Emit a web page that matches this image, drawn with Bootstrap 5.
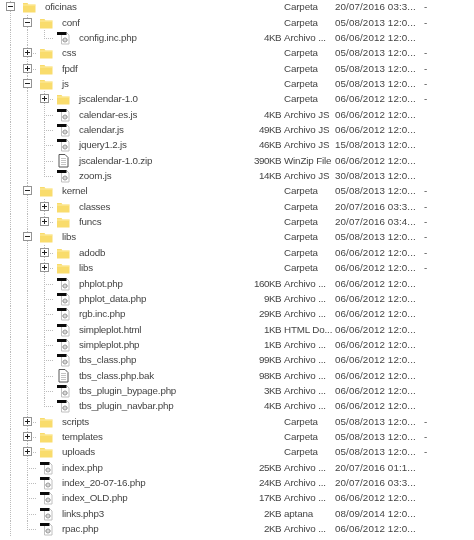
<!DOCTYPE html>
<html lang="es">
<head>
<meta charset="utf-8">
<title>oficinas</title>
<link href="https://cdn.jsdelivr.net/npm/bootstrap@5.3.0/dist/css/bootstrap.min.css" rel="stylesheet">
<style>
html, body { background: #fff; overflow: hidden; }
.explorer { margin-top: -.7px; padding-left: 2px; font: 9.8px/15.35px "Liberation Sans", Arial, sans-serif; color: #444; filter: blur(.35px); }
.fila { height: 15.35px; white-space: nowrap; }
.arbol { width: 243px; }
.cel { width: 17px; height: 15.35px; flex: none; background-repeat: no-repeat; }
.v { background-image: repeating-linear-gradient(to bottom, #bcbcbc 0 1px, transparent 1px 2px); background-size: 1px 100%; background-position: 8px 0; }
.tee { background-image: repeating-linear-gradient(to bottom, #bcbcbc 0 1px, transparent 1px 2px), repeating-linear-gradient(to right, #bcbcbc 0 1px, transparent 1px 2px); background-size: 1px 100%, 9px 1px; background-position: 8px 0, 8px 8px; }
.ell { background-image: repeating-linear-gradient(to bottom, #bcbcbc 0 1px, transparent 1px 2px), repeating-linear-gradient(to right, #bcbcbc 0 1px, transparent 1px 2px); background-size: 1px 8px, 9px 1px; background-position: 8px 0, 8px 8px; }
.caja { width: 9px; height: 9px; margin: 3px 0 0 4px; border: 1px solid #949494; background: #fff no-repeat center; display: block; }
.mas { background-image: linear-gradient(#222, #222), linear-gradient(#222, #222); background-size: 5px 1px, 1px 5px; }
.menos { background-image: linear-gradient(#222, #222); background-size: 5px 1px; }
.ico { width: 20px; height: 15px; flex: none; display: block; }
.nom { margin-left: 6px; letter-spacing: -.2px; }
.tam { width: 36px; text-align: right; letter-spacing: -.5px; }
.tipo { width: 51px; margin-left: 3px; letter-spacing: -.15px; }
.fecha { width: 89px; letter-spacing: .1px; }
</style>
</head>
<body>
<svg width="0" height="0" class="d-block position-absolute">
  <symbol id="dir" viewBox="0 0 20 15"><path d="M4 4h4.500l1 1.500H16.500V13.500H4z" fill="#f9dc6c"/><path d="M4 5.500h12.500v1H4z" fill="#fdeca4"/></symbol>
  <symbol id="php" viewBox="0 0 20 15"><path d="M8.500 2.500h5l2.500 2.500V14H8.500z" fill="#fff" stroke="#c0c0c0"/><rect x="4" y="2" width="9.500" height="3" fill="#0a0a0a"/><circle cx="12" cy="10" r="2" fill="none" stroke="#909090"/><path d="M9 10h6" stroke="#b0b0b0"/></symbol>
  <symbol id="doc" viewBox="0 0 20 15"><path d="M6 1.500h6l3 3V14H6z" fill="#fff" stroke="#555"/><path d="M8 5.500h5M8 7.500h5M8 9.500h5M8 11.500h5" stroke="#c4c4c4"/></symbol>
</svg>
<main class="explorer">
  <div class="fila d-flex"><div class="arbol d-flex"><span class="cel v"><i class="caja menos"></i></span><svg class="ico"><use href="#dir"/></svg><span class="nom">oficinas</span></div><span class="tam"></span><span class="tipo">Carpeta</span><span class="fecha">20/07/2016 03:3...</span><span>-</span></div>
  <div class="fila d-flex"><div class="arbol d-flex"><span class="cel v"></span><span class="cel v"><i class="caja menos"></i></span><svg class="ico"><use href="#dir"/></svg><span class="nom">conf</span></div><span class="tam"></span><span class="tipo">Carpeta</span><span class="fecha">05/08/2013 12:0...</span><span>-</span></div>
  <div class="fila d-flex"><div class="arbol d-flex"><span class="cel v"></span><span class="cel v"></span><span class="cel ell"></span><svg class="ico"><use href="#php"/></svg><span class="nom">config.inc.php</span></div><span class="tam">4KB</span><span class="tipo">Archivo ...</span><span class="fecha">06/06/2012 12:0...</span></div>
  <div class="fila d-flex"><div class="arbol d-flex"><span class="cel v"></span><span class="cel tee"><i class="caja mas"></i></span><svg class="ico"><use href="#dir"/></svg><span class="nom">css</span></div><span class="tam"></span><span class="tipo">Carpeta</span><span class="fecha">05/08/2013 12:0...</span><span>-</span></div>
  <div class="fila d-flex"><div class="arbol d-flex"><span class="cel v"></span><span class="cel tee"><i class="caja mas"></i></span><svg class="ico"><use href="#dir"/></svg><span class="nom">fpdf</span></div><span class="tam"></span><span class="tipo">Carpeta</span><span class="fecha">05/08/2013 12:0...</span><span>-</span></div>
  <div class="fila d-flex"><div class="arbol d-flex"><span class="cel v"></span><span class="cel v"><i class="caja menos"></i></span><svg class="ico"><use href="#dir"/></svg><span class="nom">js</span></div><span class="tam"></span><span class="tipo">Carpeta</span><span class="fecha">05/08/2013 12:0...</span><span>-</span></div>
  <div class="fila d-flex"><div class="arbol d-flex"><span class="cel v"></span><span class="cel v"></span><span class="cel tee"><i class="caja mas"></i></span><svg class="ico"><use href="#dir"/></svg><span class="nom">jscalendar-1.0</span></div><span class="tam"></span><span class="tipo">Carpeta</span><span class="fecha">06/06/2012 12:0...</span><span>-</span></div>
  <div class="fila d-flex"><div class="arbol d-flex"><span class="cel v"></span><span class="cel v"></span><span class="cel tee"></span><svg class="ico"><use href="#php"/></svg><span class="nom">calendar-es.js</span></div><span class="tam">4KB</span><span class="tipo">Archivo JS</span><span class="fecha">06/06/2012 12:0...</span></div>
  <div class="fila d-flex"><div class="arbol d-flex"><span class="cel v"></span><span class="cel v"></span><span class="cel tee"></span><svg class="ico"><use href="#php"/></svg><span class="nom">calendar.js</span></div><span class="tam">49KB</span><span class="tipo">Archivo JS</span><span class="fecha">06/06/2012 12:0...</span></div>
  <div class="fila d-flex"><div class="arbol d-flex"><span class="cel v"></span><span class="cel v"></span><span class="cel tee"></span><svg class="ico"><use href="#php"/></svg><span class="nom">jquery1.2.js</span></div><span class="tam">46KB</span><span class="tipo">Archivo JS</span><span class="fecha">15/08/2013 12:0...</span></div>
  <div class="fila d-flex"><div class="arbol d-flex"><span class="cel v"></span><span class="cel v"></span><span class="cel tee"></span><svg class="ico"><use href="#doc"/></svg><span class="nom">jscalendar-1.0.zip</span></div><span class="tam">390KB</span><span class="tipo">WinZip File</span><span class="fecha">06/06/2012 12:0...</span></div>
  <div class="fila d-flex"><div class="arbol d-flex"><span class="cel v"></span><span class="cel v"></span><span class="cel ell"></span><svg class="ico"><use href="#php"/></svg><span class="nom">zoom.js</span></div><span class="tam">14KB</span><span class="tipo">Archivo JS</span><span class="fecha">30/08/2013 12:0...</span></div>
  <div class="fila d-flex"><div class="arbol d-flex"><span class="cel v"></span><span class="cel v"><i class="caja menos"></i></span><svg class="ico"><use href="#dir"/></svg><span class="nom">kernel</span></div><span class="tam"></span><span class="tipo">Carpeta</span><span class="fecha">05/08/2013 12:0...</span><span>-</span></div>
  <div class="fila d-flex"><div class="arbol d-flex"><span class="cel v"></span><span class="cel v"></span><span class="cel tee"><i class="caja mas"></i></span><svg class="ico"><use href="#dir"/></svg><span class="nom">classes</span></div><span class="tam"></span><span class="tipo">Carpeta</span><span class="fecha">20/07/2016 03:3...</span><span>-</span></div>
  <div class="fila d-flex"><div class="arbol d-flex"><span class="cel v"></span><span class="cel v"></span><span class="cel ell"><i class="caja mas"></i></span><svg class="ico"><use href="#dir"/></svg><span class="nom">funcs</span></div><span class="tam"></span><span class="tipo">Carpeta</span><span class="fecha">20/07/2016 03:4...</span><span>-</span></div>
  <div class="fila d-flex"><div class="arbol d-flex"><span class="cel v"></span><span class="cel v"><i class="caja menos"></i></span><svg class="ico"><use href="#dir"/></svg><span class="nom">libs</span></div><span class="tam"></span><span class="tipo">Carpeta</span><span class="fecha">05/08/2013 12:0...</span><span>-</span></div>
  <div class="fila d-flex"><div class="arbol d-flex"><span class="cel v"></span><span class="cel v"></span><span class="cel tee"><i class="caja mas"></i></span><svg class="ico"><use href="#dir"/></svg><span class="nom">adodb</span></div><span class="tam"></span><span class="tipo">Carpeta</span><span class="fecha">06/06/2012 12:0...</span><span>-</span></div>
  <div class="fila d-flex"><div class="arbol d-flex"><span class="cel v"></span><span class="cel v"></span><span class="cel tee"><i class="caja mas"></i></span><svg class="ico"><use href="#dir"/></svg><span class="nom">libs</span></div><span class="tam"></span><span class="tipo">Carpeta</span><span class="fecha">06/06/2012 12:0...</span><span>-</span></div>
  <div class="fila d-flex"><div class="arbol d-flex"><span class="cel v"></span><span class="cel v"></span><span class="cel tee"></span><svg class="ico"><use href="#php"/></svg><span class="nom">phplot.php</span></div><span class="tam">160KB</span><span class="tipo">Archivo ...</span><span class="fecha">06/06/2012 12:0...</span></div>
  <div class="fila d-flex"><div class="arbol d-flex"><span class="cel v"></span><span class="cel v"></span><span class="cel tee"></span><svg class="ico"><use href="#php"/></svg><span class="nom">phplot_data.php</span></div><span class="tam">9KB</span><span class="tipo">Archivo ...</span><span class="fecha">06/06/2012 12:0...</span></div>
  <div class="fila d-flex"><div class="arbol d-flex"><span class="cel v"></span><span class="cel v"></span><span class="cel tee"></span><svg class="ico"><use href="#php"/></svg><span class="nom">rgb.inc.php</span></div><span class="tam">29KB</span><span class="tipo">Archivo ...</span><span class="fecha">06/06/2012 12:0...</span></div>
  <div class="fila d-flex"><div class="arbol d-flex"><span class="cel v"></span><span class="cel v"></span><span class="cel tee"></span><svg class="ico"><use href="#php"/></svg><span class="nom">simpleplot.html</span></div><span class="tam">1KB</span><span class="tipo">HTML Do...</span><span class="fecha">06/06/2012 12:0...</span></div>
  <div class="fila d-flex"><div class="arbol d-flex"><span class="cel v"></span><span class="cel v"></span><span class="cel tee"></span><svg class="ico"><use href="#php"/></svg><span class="nom">simpleplot.php</span></div><span class="tam">1KB</span><span class="tipo">Archivo ...</span><span class="fecha">06/06/2012 12:0...</span></div>
  <div class="fila d-flex"><div class="arbol d-flex"><span class="cel v"></span><span class="cel v"></span><span class="cel tee"></span><svg class="ico"><use href="#php"/></svg><span class="nom">tbs_class.php</span></div><span class="tam">99KB</span><span class="tipo">Archivo ...</span><span class="fecha">06/06/2012 12:0...</span></div>
  <div class="fila d-flex"><div class="arbol d-flex"><span class="cel v"></span><span class="cel v"></span><span class="cel tee"></span><svg class="ico"><use href="#doc"/></svg><span class="nom">tbs_class.php.bak</span></div><span class="tam">98KB</span><span class="tipo">Archivo ...</span><span class="fecha">06/06/2012 12:0...</span></div>
  <div class="fila d-flex"><div class="arbol d-flex"><span class="cel v"></span><span class="cel v"></span><span class="cel tee"></span><svg class="ico"><use href="#php"/></svg><span class="nom">tbs_plugin_bypage.php</span></div><span class="tam">3KB</span><span class="tipo">Archivo ...</span><span class="fecha">06/06/2012 12:0...</span></div>
  <div class="fila d-flex"><div class="arbol d-flex"><span class="cel v"></span><span class="cel v"></span><span class="cel ell"></span><svg class="ico"><use href="#php"/></svg><span class="nom">tbs_plugin_navbar.php</span></div><span class="tam">4KB</span><span class="tipo">Archivo ...</span><span class="fecha">06/06/2012 12:0...</span></div>
  <div class="fila d-flex"><div class="arbol d-flex"><span class="cel v"></span><span class="cel tee"><i class="caja mas"></i></span><svg class="ico"><use href="#dir"/></svg><span class="nom">scripts</span></div><span class="tam"></span><span class="tipo">Carpeta</span><span class="fecha">05/08/2013 12:0...</span><span>-</span></div>
  <div class="fila d-flex"><div class="arbol d-flex"><span class="cel v"></span><span class="cel tee"><i class="caja mas"></i></span><svg class="ico"><use href="#dir"/></svg><span class="nom">templates</span></div><span class="tam"></span><span class="tipo">Carpeta</span><span class="fecha">05/08/2013 12:0...</span><span>-</span></div>
  <div class="fila d-flex"><div class="arbol d-flex"><span class="cel v"></span><span class="cel tee"><i class="caja mas"></i></span><svg class="ico"><use href="#dir"/></svg><span class="nom">uploads</span></div><span class="tam"></span><span class="tipo">Carpeta</span><span class="fecha">05/08/2013 12:0...</span><span>-</span></div>
  <div class="fila d-flex"><div class="arbol d-flex"><span class="cel v"></span><span class="cel tee"></span><svg class="ico"><use href="#php"/></svg><span class="nom">index.php</span></div><span class="tam">25KB</span><span class="tipo">Archivo ...</span><span class="fecha">20/07/2016 01:1...</span></div>
  <div class="fila d-flex"><div class="arbol d-flex"><span class="cel v"></span><span class="cel tee"></span><svg class="ico"><use href="#php"/></svg><span class="nom">index_20-07-16.php</span></div><span class="tam">24KB</span><span class="tipo">Archivo ...</span><span class="fecha">20/07/2016 03:3...</span></div>
  <div class="fila d-flex"><div class="arbol d-flex"><span class="cel v"></span><span class="cel tee"></span><svg class="ico"><use href="#php"/></svg><span class="nom">index_OLD.php</span></div><span class="tam">17KB</span><span class="tipo">Archivo ...</span><span class="fecha">06/06/2012 12:0...</span></div>
  <div class="fila d-flex"><div class="arbol d-flex"><span class="cel v"></span><span class="cel tee"></span><svg class="ico"><use href="#php"/></svg><span class="nom">links.php3</span></div><span class="tam">2KB</span><span class="tipo">aptana</span><span class="fecha">08/09/2014 12:0...</span></div>
  <div class="fila d-flex"><div class="arbol d-flex"><span class="cel v"></span><span class="cel ell"></span><svg class="ico"><use href="#php"/></svg><span class="nom">rpac.php</span></div><span class="tam">2KB</span><span class="tipo">Archivo ...</span><span class="fecha">06/06/2012 12:0...</span></div>
</main>
<script src="https://cdn.jsdelivr.net/npm/bootstrap@5.3.0/dist/js/bootstrap.bundle.min.js"></script>
</body>
</html>
